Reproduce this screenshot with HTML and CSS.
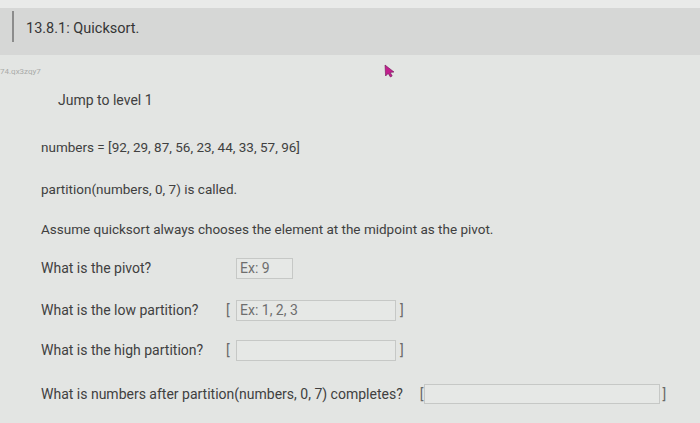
FILE: index.html
```html
<!DOCTYPE html>
<html lang="en">
<head>
<meta charset="utf-8">
<title>13.8.1: Quicksort.</title>
<link rel="stylesheet" href="styles.css">
</head>
<body>
<div class="page">
  <div class="topstrip"></div>
  <header class="header">
    <span class="bar"></span>
    <h1 class="title">13.8.1: Quicksort.</h1>
  </header>
  <div class="meta">74.qx3zqy7</div>
  <svg class="cursor" width="12" height="14" viewBox="0 0 12 14"><path d="M1 1 L1.6 12 L4.2 9.4 L6.4 13 L8.2 12 L6.2 8.4 L10 8 Z" fill="#c21f8e" stroke="#6e1457" stroke-width="0.6"/></svg>
  <main class="content">
    <div class="jump">Jump to level 1</div>
    <p class="line l-numbers">numbers = [92, 29, 87, 56, 23, 44, 33, 57, 96]</p>
    <p class="line l-partition">partition(numbers, 0, 7) is called.</p>
    <p class="line l-assume">Assume quicksort always chooses the element at the midpoint as the pivot.</p>
    <div class="qgrid">
      <div class="row r-pivot">
        <span class="q">What is the pivot?</span>
        <span class="br"></span>
        <span class="input w-pivot">Ex: 9</span>
      </div>
      <div class="row r-low">
        <span class="q">What is the low partition?</span>
        <span class="br">[</span>
        <span class="input w-part">Ex: 1, 2, 3</span>
        <span class="br br-end">]</span>
      </div>
      <div class="row r-high">
        <span class="q">What is the high partition?</span>
        <span class="br">[</span>
        <span class="input w-part"></span>
        <span class="br br-end">]</span>
      </div>
    </div>
    <div class="row r-last">
      <span class="q-long">What is numbers after partition(numbers, 0, 7) completes?</span>
      <span class="br">[</span>
      <span class="input w-last"></span>
      <span class="br br-end-last">]</span>
    </div>
  </main>
</div>
</body>
</html>
```
FILE: styles.css
```css
html, body {
  margin: 0;
  padding: 0;
}
body {
  background: #e3e5e3;
  font-family: Roboto, "Liberation Sans", Arial, sans-serif;
  color: #404040;
  width: 700px;
  height: 423px;
  overflow: hidden;
}
.page {
  position: relative;
  height: 423px;
}
.topstrip {
  height: 8px;
  background: #e9eae9;
}
.header {
  height: 47px;
  background: #d6d7d6;
  display: flex;
  align-items: flex-start;
  padding: 3px 0 0 12px;
  box-sizing: border-box;
}
.bar {
  width: 2px;
  height: 31px;
  background: #8c8c8c;
}
.title {
  margin: 0 0 0 12px;
  font-size: 14.5px;
  font-weight: 400;
  line-height: 31px;
  padding-top: 2px;
  color: #353535;
}
.meta {
  margin-top: 11px;
  font-size: 8px;
  line-height: 11px;
  color: #a9aba9;
}
.cursor {
  position: absolute;
  left: 384px;
  top: 64px;
}
.content {
  padding-left: 41px;
}
.jump {
  margin: 13px 0 0 17px;
  font-size: 14px;
  line-height: 20px;
}
.line {
  margin: 0;
  font-size: 13.5px;
  line-height: 20px;
}
.l-numbers { margin-top: 27px; }
.l-partition { margin-top: 22px; }
.l-assume { margin-top: 20px; }
.qgrid {
  display: flex;
  flex-direction: column;
}
.row {
  display: grid;
  grid-template-columns: 185px 10px auto auto;
  justify-content: start;
  align-items: center;
  height: 21px;
  font-size: 14px;
  line-height: 21px;
}
.r-pivot { margin-top: 19px; }
.r-low { margin-top: 21px; }
.r-high { margin-top: 19px; }
.r-last {
  margin-top: 23px;
  display: flex;
  align-items: center;
  height: 20px;
}
.q-long {
  margin-right: 9px;
}
.r-last .br {
  margin-left: 8px;
  margin-right: 1px;
}
.br {
  color: #6a6a6a;
  font-size: 14px;
}
.br-end {
  margin-left: 4px;
}
.r-last .br-end-last {
  margin-left: 2px;
}
.input {
  display: block;
  box-sizing: border-box;
  height: 21px;
  border: 1px solid #c6c8c6;
  background: #e6e8e6;
  color: #6e6e6e;
  font-size: 14px;
  line-height: 19px;
  padding-left: 3px;
}
.w-pivot { width: 57px; }
.w-part { width: 160px; }
.w-last { width: 236px; height: 20px; }
```
